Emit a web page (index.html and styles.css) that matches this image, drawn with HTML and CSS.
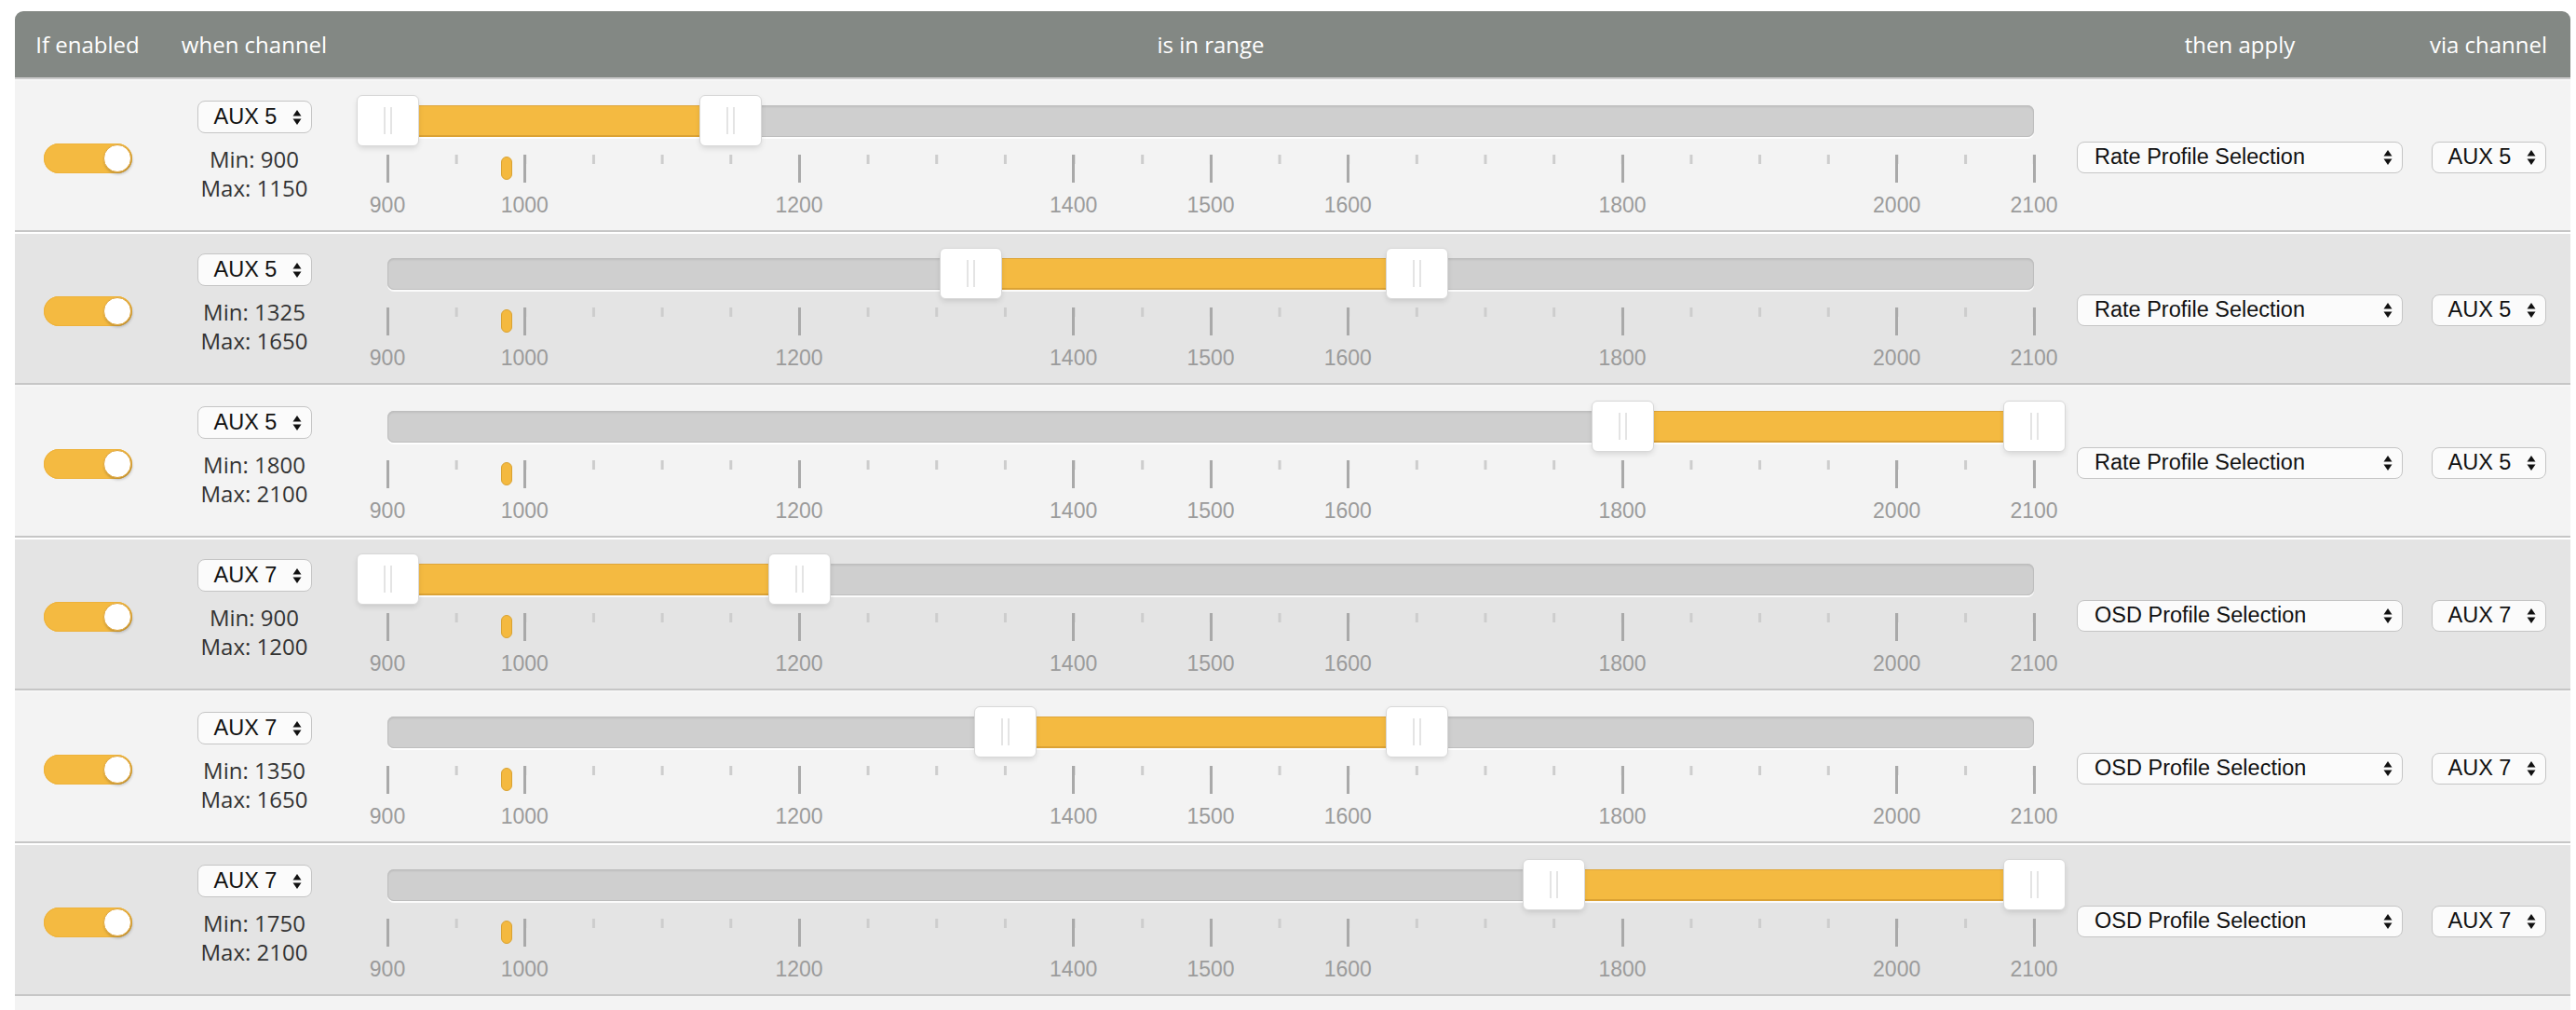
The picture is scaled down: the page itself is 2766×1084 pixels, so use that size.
FILE: index.html
```html
<!DOCTYPE html>
<html lang="en">
<head>
<meta charset="utf-8">
<title>Adjustments</title>
<link rel="stylesheet" href="styles.css">
</head>
<body>
<div class="table">
  <div class="head">
    <div class="hc">If enabled</div>
    <div class="hc">when channel</div>
    <div class="hc">is in range</div>
    <div class="hc">then apply</div>
    <div class="hc">via channel</div>
  </div>

  <div class="row odd">
    <div class="c-en"><span class="toggle"><span class="knob"></span></span></div>
    <div class="c-ch">
      <div class="sel sel-ch"><span>AUX 5</span><svg class="arr" viewBox="0 0 10 18"><path d="M5 1L9.5 7.5H0.5Z"/><path d="M0.5 10.5H9.5L5 17Z"/></svg></div>
      <div class="mm">Min: 900</div>
      <div class="mm">Max: 1150</div>
    </div>
    <div class="c-range">
      <div class="slider">
        <div class="track"><div class="fill" style="--a:900;--b:1150"></div></div>
        <div class="handle" style="--v:900"></div>
        <div class="handle" style="--v:1150"></div>
      </div>
      <div class="scale">
        <div class="minor"></div>
        <div class="marker" style="--v:987"></div>
        <div class="mark" style="--v:900"><span>900</span></div>
        <div class="mark" style="--v:1000"><span>1000</span></div>
        <div class="mark" style="--v:1200"><span>1200</span></div>
        <div class="mark" style="--v:1400"><span>1400</span></div>
        <div class="mark" style="--v:1500"><span>1500</span></div>
        <div class="mark" style="--v:1600"><span>1600</span></div>
        <div class="mark" style="--v:1800"><span>1800</span></div>
        <div class="mark" style="--v:2000"><span>2000</span></div>
        <div class="mark" style="--v:2100"><span>2100</span></div>
      </div>
    </div>
    <div class="c-fn"><div class="sel sel-fn"><span>Rate Profile Selection</span><svg class="arr" viewBox="0 0 10 18"><path d="M5 1L9.5 7.5H0.5Z"/><path d="M0.5 10.5H9.5L5 17Z"/></svg></div></div>
    <div class="c-via"><div class="sel sel-via"><span>AUX 5</span><svg class="arr" viewBox="0 0 10 18"><path d="M5 1L9.5 7.5H0.5Z"/><path d="M0.5 10.5H9.5L5 17Z"/></svg></div></div>
  </div>

  <div class="row even">
    <div class="c-en"><span class="toggle"><span class="knob"></span></span></div>
    <div class="c-ch">
      <div class="sel sel-ch"><span>AUX 5</span><svg class="arr" viewBox="0 0 10 18"><path d="M5 1L9.5 7.5H0.5Z"/><path d="M0.5 10.5H9.5L5 17Z"/></svg></div>
      <div class="mm">Min: 1325</div>
      <div class="mm">Max: 1650</div>
    </div>
    <div class="c-range">
      <div class="slider">
        <div class="track"><div class="fill" style="--a:1325;--b:1650"></div></div>
        <div class="handle" style="--v:1325"></div>
        <div class="handle" style="--v:1650"></div>
      </div>
      <div class="scale">
        <div class="minor"></div>
        <div class="marker" style="--v:987"></div>
        <div class="mark" style="--v:900"><span>900</span></div>
        <div class="mark" style="--v:1000"><span>1000</span></div>
        <div class="mark" style="--v:1200"><span>1200</span></div>
        <div class="mark" style="--v:1400"><span>1400</span></div>
        <div class="mark" style="--v:1500"><span>1500</span></div>
        <div class="mark" style="--v:1600"><span>1600</span></div>
        <div class="mark" style="--v:1800"><span>1800</span></div>
        <div class="mark" style="--v:2000"><span>2000</span></div>
        <div class="mark" style="--v:2100"><span>2100</span></div>
      </div>
    </div>
    <div class="c-fn"><div class="sel sel-fn"><span>Rate Profile Selection</span><svg class="arr" viewBox="0 0 10 18"><path d="M5 1L9.5 7.5H0.5Z"/><path d="M0.5 10.5H9.5L5 17Z"/></svg></div></div>
    <div class="c-via"><div class="sel sel-via"><span>AUX 5</span><svg class="arr" viewBox="0 0 10 18"><path d="M5 1L9.5 7.5H0.5Z"/><path d="M0.5 10.5H9.5L5 17Z"/></svg></div></div>
  </div>

  <div class="row odd">
    <div class="c-en"><span class="toggle"><span class="knob"></span></span></div>
    <div class="c-ch">
      <div class="sel sel-ch"><span>AUX 5</span><svg class="arr" viewBox="0 0 10 18"><path d="M5 1L9.5 7.5H0.5Z"/><path d="M0.5 10.5H9.5L5 17Z"/></svg></div>
      <div class="mm">Min: 1800</div>
      <div class="mm">Max: 2100</div>
    </div>
    <div class="c-range">
      <div class="slider">
        <div class="track"><div class="fill" style="--a:1800;--b:2100"></div></div>
        <div class="handle" style="--v:1800"></div>
        <div class="handle" style="--v:2100"></div>
      </div>
      <div class="scale">
        <div class="minor"></div>
        <div class="marker" style="--v:987"></div>
        <div class="mark" style="--v:900"><span>900</span></div>
        <div class="mark" style="--v:1000"><span>1000</span></div>
        <div class="mark" style="--v:1200"><span>1200</span></div>
        <div class="mark" style="--v:1400"><span>1400</span></div>
        <div class="mark" style="--v:1500"><span>1500</span></div>
        <div class="mark" style="--v:1600"><span>1600</span></div>
        <div class="mark" style="--v:1800"><span>1800</span></div>
        <div class="mark" style="--v:2000"><span>2000</span></div>
        <div class="mark" style="--v:2100"><span>2100</span></div>
      </div>
    </div>
    <div class="c-fn"><div class="sel sel-fn"><span>Rate Profile Selection</span><svg class="arr" viewBox="0 0 10 18"><path d="M5 1L9.5 7.5H0.5Z"/><path d="M0.5 10.5H9.5L5 17Z"/></svg></div></div>
    <div class="c-via"><div class="sel sel-via"><span>AUX 5</span><svg class="arr" viewBox="0 0 10 18"><path d="M5 1L9.5 7.5H0.5Z"/><path d="M0.5 10.5H9.5L5 17Z"/></svg></div></div>
  </div>

  <div class="row even">
    <div class="c-en"><span class="toggle"><span class="knob"></span></span></div>
    <div class="c-ch">
      <div class="sel sel-ch"><span>AUX 7</span><svg class="arr" viewBox="0 0 10 18"><path d="M5 1L9.5 7.5H0.5Z"/><path d="M0.5 10.5H9.5L5 17Z"/></svg></div>
      <div class="mm">Min: 900</div>
      <div class="mm">Max: 1200</div>
    </div>
    <div class="c-range">
      <div class="slider">
        <div class="track"><div class="fill" style="--a:900;--b:1200"></div></div>
        <div class="handle" style="--v:900"></div>
        <div class="handle" style="--v:1200"></div>
      </div>
      <div class="scale">
        <div class="minor"></div>
        <div class="marker" style="--v:987"></div>
        <div class="mark" style="--v:900"><span>900</span></div>
        <div class="mark" style="--v:1000"><span>1000</span></div>
        <div class="mark" style="--v:1200"><span>1200</span></div>
        <div class="mark" style="--v:1400"><span>1400</span></div>
        <div class="mark" style="--v:1500"><span>1500</span></div>
        <div class="mark" style="--v:1600"><span>1600</span></div>
        <div class="mark" style="--v:1800"><span>1800</span></div>
        <div class="mark" style="--v:2000"><span>2000</span></div>
        <div class="mark" style="--v:2100"><span>2100</span></div>
      </div>
    </div>
    <div class="c-fn"><div class="sel sel-fn"><span>OSD Profile Selection</span><svg class="arr" viewBox="0 0 10 18"><path d="M5 1L9.5 7.5H0.5Z"/><path d="M0.5 10.5H9.5L5 17Z"/></svg></div></div>
    <div class="c-via"><div class="sel sel-via"><span>AUX 7</span><svg class="arr" viewBox="0 0 10 18"><path d="M5 1L9.5 7.5H0.5Z"/><path d="M0.5 10.5H9.5L5 17Z"/></svg></div></div>
  </div>

  <div class="row odd">
    <div class="c-en"><span class="toggle"><span class="knob"></span></span></div>
    <div class="c-ch">
      <div class="sel sel-ch"><span>AUX 7</span><svg class="arr" viewBox="0 0 10 18"><path d="M5 1L9.5 7.5H0.5Z"/><path d="M0.5 10.5H9.5L5 17Z"/></svg></div>
      <div class="mm">Min: 1350</div>
      <div class="mm">Max: 1650</div>
    </div>
    <div class="c-range">
      <div class="slider">
        <div class="track"><div class="fill" style="--a:1350;--b:1650"></div></div>
        <div class="handle" style="--v:1350"></div>
        <div class="handle" style="--v:1650"></div>
      </div>
      <div class="scale">
        <div class="minor"></div>
        <div class="marker" style="--v:987"></div>
        <div class="mark" style="--v:900"><span>900</span></div>
        <div class="mark" style="--v:1000"><span>1000</span></div>
        <div class="mark" style="--v:1200"><span>1200</span></div>
        <div class="mark" style="--v:1400"><span>1400</span></div>
        <div class="mark" style="--v:1500"><span>1500</span></div>
        <div class="mark" style="--v:1600"><span>1600</span></div>
        <div class="mark" style="--v:1800"><span>1800</span></div>
        <div class="mark" style="--v:2000"><span>2000</span></div>
        <div class="mark" style="--v:2100"><span>2100</span></div>
      </div>
    </div>
    <div class="c-fn"><div class="sel sel-fn"><span>OSD Profile Selection</span><svg class="arr" viewBox="0 0 10 18"><path d="M5 1L9.5 7.5H0.5Z"/><path d="M0.5 10.5H9.5L5 17Z"/></svg></div></div>
    <div class="c-via"><div class="sel sel-via"><span>AUX 7</span><svg class="arr" viewBox="0 0 10 18"><path d="M5 1L9.5 7.5H0.5Z"/><path d="M0.5 10.5H9.5L5 17Z"/></svg></div></div>
  </div>

  <div class="row even">
    <div class="c-en"><span class="toggle"><span class="knob"></span></span></div>
    <div class="c-ch">
      <div class="sel sel-ch"><span>AUX 7</span><svg class="arr" viewBox="0 0 10 18"><path d="M5 1L9.5 7.5H0.5Z"/><path d="M0.5 10.5H9.5L5 17Z"/></svg></div>
      <div class="mm">Min: 1750</div>
      <div class="mm">Max: 2100</div>
    </div>
    <div class="c-range">
      <div class="slider">
        <div class="track"><div class="fill" style="--a:1750;--b:2100"></div></div>
        <div class="handle" style="--v:1750"></div>
        <div class="handle" style="--v:2100"></div>
      </div>
      <div class="scale">
        <div class="minor"></div>
        <div class="marker" style="--v:987"></div>
        <div class="mark" style="--v:900"><span>900</span></div>
        <div class="mark" style="--v:1000"><span>1000</span></div>
        <div class="mark" style="--v:1200"><span>1200</span></div>
        <div class="mark" style="--v:1400"><span>1400</span></div>
        <div class="mark" style="--v:1500"><span>1500</span></div>
        <div class="mark" style="--v:1600"><span>1600</span></div>
        <div class="mark" style="--v:1800"><span>1800</span></div>
        <div class="mark" style="--v:2000"><span>2000</span></div>
        <div class="mark" style="--v:2100"><span>2100</span></div>
      </div>
    </div>
    <div class="c-fn"><div class="sel sel-fn"><span>OSD Profile Selection</span><svg class="arr" viewBox="0 0 10 18"><path d="M5 1L9.5 7.5H0.5Z"/><path d="M0.5 10.5H9.5L5 17Z"/></svg></div></div>
    <div class="c-via"><div class="sel sel-via"><span>AUX 7</span><svg class="arr" viewBox="0 0 10 18"><path d="M5 1L9.5 7.5H0.5Z"/><path d="M0.5 10.5H9.5L5 17Z"/></svg></div></div>
  </div>

  <div class="tail"></div>
</div>
</body>
</html>
```

FILE: styles.css
```css
* { box-sizing: border-box; }
html, body { margin: 0; background: #ffffff; }
body {
  padding: 12px 6px 0 16px;
  font-family: "Open Sans", "Liberation Sans", sans-serif;
  overflow: hidden;
}
.table { width: 2744px; }

.head {
  display: grid;
  grid-template-columns: 156px 202px 1852px 358px 176px;
  height: 73px;
  align-items: center;
  background: #838884;
  border-radius: 9px 9px 0 0;
  border-bottom: 2px solid #cbcbcb;
  color: #ffffff;
  font-size: 24px;
  text-align: center;
}

.row {
  display: grid;
  grid-template-columns: 156px 202px 1852px 358px 176px;
  height: 164px;
  border-top: 2px solid #ffffff;
  border-bottom: 2px solid #c6c6c6;
}
.row.odd { background: #f3f3f3; border-top-color: #f6f6f6; }
.row.even { background: #e4e4e4; }
.tail { height: 15px; background: #f3f3f3; }

/* enable toggle */
.c-en {
  display: flex;
  align-items: center;
  justify-content: center;
  padding-top: 5px;
}
.toggle {
  position: relative;
  display: block;
  width: 95px;
  height: 32px;
  border-radius: 16px;
  background: #f4ba41;
  box-shadow: inset 0 0 0 1px #eeb23a;
}
.knob {
  position: absolute;
  top: 1px;
  right: 1px;
  width: 30px;
  height: 30px;
  border-radius: 50%;
  background: #ffffff;
  border: 1px solid #e0a63b;
  box-shadow: 1px 2px 3px rgba(0, 0, 0, 0.22);
}

/* channel column */
.c-ch {
  padding-top: 21px;
  text-align: center;
}
.mm {
  font-size: 24px;
  line-height: 31px;
  color: #333333;
}

/* select lookalike */
.sel {
  display: flex;
  align-items: center;
  justify-content: space-between;
  height: 35px;
  padding: 0 10px 0 17px;
  border: 1px solid #c5c5c5;
  border-radius: 8px;
  background: #fbfbfb;
  font-family: "Liberation Sans", Arial, sans-serif;
  font-size: 23.5px;
  color: #111111;
  text-align: left;
  white-space: nowrap;
}
.arr { width: 10px; height: 18px; flex: none; fill: #111111; }
.sel-ch { width: 123px; margin: 0 auto 12px; }
.sel-fn { width: 350px; height: 34px; padding-left: 18px; }
.sel-via { width: 123px; height: 34px; }

.c-fn, .c-via {
  display: flex;
  align-items: center;
  justify-content: center;
  padding-top: 3px;
}

/* range column */
.c-range { padding: 15px 42px 0; }
.slider {
  position: relative;
  height: 55px;
}
.track {
  position: absolute;
  top: 11px;
  left: 0;
  right: 0;
  height: 34px;
  border-radius: 7px;
  background: #cfcfcf;
  box-shadow: inset 0 0 0 1px #bebebe, inset 0 2px 2px rgba(0, 0, 0, 0.08), 0 2px 0 rgba(255, 255, 255, 0.85);
}
.fill {
  position: absolute;
  top: 0;
  bottom: 0;
  left: calc((var(--a) - 900) / 12 * 1%);
  width: calc((var(--b) - var(--a)) / 12 * 1%);
  background: #f4ba41;
  box-shadow: inset 0 1px 0 #dea53a, inset 0 -2px 0 #dba234;
}
.handle {
  position: absolute;
  top: 0;
  left: calc((var(--v) - 900) / 12 * 1%);
  width: 67px;
  height: 55px;
  margin-left: -33.5px;
  border: 1px solid #d8d8d8;
  border-radius: 6px;
  background: #ffffff;
  box-shadow: 0 3px 6px -1px rgba(0, 0, 0, 0.13);
}
.handle::before,
.handle::after {
  content: "";
  position: absolute;
  top: 12px;
  height: 29px;
  width: 2px;
  background: #e4e4e4;
}
.handle::before { left: 28px; }
.handle::after { left: 35px; }

.scale {
  position: relative;
  height: 76px;
  margin-top: 9px;
}
.minor {
  position: absolute;
  top: 0;
  left: -1.5px;
  width: 1772px;
  height: 10px;
  background-image: linear-gradient(to right, #cdcdcd 0, #cdcdcd 3px, transparent 3px);
  background-size: 73.6667px 10px;
  background-repeat: repeat-x;
}
.mark {
  position: absolute;
  top: 0;
  left: calc((var(--v) - 900) / 12 * 1%);
  width: 3px;
  height: 30px;
  margin-left: -1.5px;
  background: #a9a9a9;
}
.mark span {
  position: absolute;
  top: 41px;
  left: 50%;
  transform: translateX(-50%);
  font-family: "Liberation Sans", Arial, sans-serif;
  font-size: 23px;
  line-height: 26px;
  color: #9b9b9b;
  white-space: nowrap;
}
.marker {
  position: absolute;
  top: 2px;
  left: calc((var(--v) - 900) / 12 * 1%);
  width: 12px;
  height: 25px;
  margin-left: -6px;
  border-radius: 6px;
  background: #f4b93f;
  border: 1px solid #d9a232;
}
```
